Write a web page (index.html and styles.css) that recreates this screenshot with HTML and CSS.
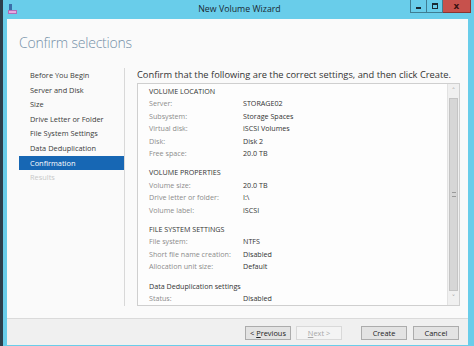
FILE: index.html
```html
<!DOCTYPE html>
<html>
<head>
<meta charset="utf-8">
<title>New Volume Wizard</title>
<link rel="stylesheet" href="styles.css">
</head>
<body>
<div class="window">
	<div class="titlebar">
		<svg class="app-icon" width="9" height="11" viewBox="0 0 9 11">
			<rect x="1" y="0" width="3" height="6" fill="#3a6ea8"/>
			<rect x="0" y="6" width="9" height="4" fill="#b06cb8"/>
			<rect x="1" y="7" width="7" height="2" fill="#e8a8e0"/>
		</svg>
		<div class="title">New Volume Wizard</div>
		<div class="controls">
			<span class="ctl ctl-min"><i></i></span>
			<span class="ctl ctl-max"><i></i></span>
			<span class="ctl ctl-close">x</span>
		</div>
	</div>
	<div class="client">
		<h1 class="page-title">Confirm selections</h1>
		<div class="main">
			<ul class="steps">
				<li>Before You Begin</li>
				<li>Server and Disk</li>
				<li>Size</li>
				<li>Drive Letter or Folder</li>
				<li>File System Settings</li>
				<li>Data Deduplication</li>
				<li class="current">Confirmation</li>
				<li class="disabled">Results</li>
			</ul>
			<div class="content">
				<p class="intro">Confirm that the following are the correct settings, and then click Create.</p>
				<div class="summary">
					<div class="summary-body">
						<div class="section">
							<div class="section-title">VOLUME LOCATION</div>
							<div class="row"><span class="label">Server:</span><span class="value">STORAGE02</span></div>
							<div class="row"><span class="label">Subsystem:</span><span class="value">Storage Spaces</span></div>
							<div class="row"><span class="label">Virtual disk:</span><span class="value">iSCSI Volumes</span></div>
							<div class="row"><span class="label">Disk:</span><span class="value">Disk 2</span></div>
							<div class="row"><span class="label">Free space:</span><span class="value">20.0 TB</span></div>
						</div>
						<div class="section">
							<div class="section-title">VOLUME PROPERTIES</div>
							<div class="row"><span class="label">Volume size:</span><span class="value">20.0 TB</span></div>
							<div class="row"><span class="label">Drive letter or folder:</span><span class="value">I:\</span></div>
							<div class="row"><span class="label">Volume label:</span><span class="value">iSCSI</span></div>
						</div>
						<div class="section">
							<div class="section-title">FILE SYSTEM SETTINGS</div>
							<div class="row"><span class="label">File system:</span><span class="value">NTFS</span></div>
							<div class="row"><span class="label">Short file name creation:</span><span class="value">Disabled</span></div>
							<div class="row"><span class="label">Allocation unit size:</span><span class="value">Default</span></div>
						</div>
						<div class="section">
							<div class="section-title">Data Deduplication settings</div>
							<div class="row"><span class="label">Status:</span><span class="value">Disabled</span></div>
						</div>
					</div>
					<div class="scrollbar">
						<div class="sb-arrow">&#708;</div>
						<div class="sb-thumb"><i></i></div>
						<div class="sb-arrow">&#709;</div>
					</div>
				</div>
			</div>
		</div>
		<div class="footer">
			<button class="btn">&lt; <u>P</u>revious</button>
			<button class="btn" disabled><u>N</u>ext &gt;</button>
			<button class="btn btn-create">Create</button>
			<button class="btn">Cancel</button>
		</div>
	</div>
</div>
</body>
</html>
```

FILE: styles.css
```css
html, body {margin:0; padding:0;}
body {background:#2d3f4c; font-family:"Open Sans", "Noto Sans", sans-serif; color:#333; overflow:hidden;}

.window {margin-left:3px; width:471px; height:346px; background:#69cdea; display:flex; flex-direction:column;}

.titlebar {height:19px; display:grid; grid-template-columns:1fr auto 1fr; align-items:start; padding:0 3px 0 5px;}
.app-icon {margin-top:4px;}
.title {font-size:8.8px; line-height:19px; color:#1a2a33;}
.controls {justify-self:end; display:flex;}
.ctl {height:13px; border:1px solid #3f7d92; border-top:none; display:flex; align-items:center; justify-content:center; box-sizing:border-box;}
.ctl + .ctl {border-left:none;}
.ctl-min {width:17px;}
.ctl-min i {width:5px; height:2px; background:#1a2a33; margin-top:3px;}
.ctl-max {width:16px;}
.ctl-max i {width:4px; height:3px; border:1px solid #1a2a33; border-top-width:2px;}
.ctl-close {width:28px; background:#c7514c; border-color:#8a3532; color:#3a1212; font:bold 9px/1 "DejaVu Sans", sans-serif;}

.client {flex:1; margin:0 6px 5px 4px; background:#fafafa; display:flex; flex-direction:column;}

.page-title {margin:0; padding:15px 0 0 12px; height:49px; box-sizing:border-box; font-size:14px; font-weight:300; line-height:18px; letter-spacing:-0.2px; color:#7490a8;}

.main {flex:1; display:flex; padding-bottom:12px;}

.steps {list-style:none; margin:0; padding:0 0 0 12px; width:105px; border-right:1px solid #d8d8d8; font-size:7.4px;}
.steps li {height:14.6px; line-height:14.6px; padding-left:11px; color:#3a3a3a; white-space:nowrap;}
.steps li.current {background:#1767b4; color:#fff;}
.steps li.disabled {color:#c8c8c8;}

.content {flex:1; display:flex; flex-direction:column; padding:0 8px 0 12px;}
.intro {margin:0; height:15px; line-height:14.6px; font-size:9.3px; color:#333; white-space:nowrap;}
.summary {flex:1; display:flex; border:1px solid #cfcfcf; background:#fdfdfd;}
.summary-body {flex:1; padding:1px 0 0 11px; font-size:7.15px; line-height:12.4px;}
.section + .section {margin-top:7px;}
.section-title {color:#333;}
.row {display:flex;}
.label {width:94px; color:#8c8c8c;}
.value {color:#333;}

.scrollbar {width:11px; display:flex; flex-direction:column; border-left:1px solid #e2e2e2; background:#f0f0f0;}
.sb-arrow {height:14px; font:7px/14px "DejaVu Sans", sans-serif; color:#9a9a9a; text-align:center;}
.sb-thumb {flex:1; margin:0 1px; background:#d6d6d6; border:1px solid #c4c4c4; display:flex; align-items:center; justify-content:center;}
.sb-thumb i {width:4px; height:3px; border-top:1px solid #9a9a9a; border-bottom:1px solid #9a9a9a;}

.footer {height:27px; box-sizing:border-box; border-top:1px solid #dadada; background:#f0f0f0; display:flex; justify-content:flex-end; align-items:flex-start; padding:7px 9px 0 0;}
.btn {width:46px; height:14px; margin-left:5px; padding:0; box-sizing:border-box; border:1px solid #acacac; background:#e3e3e3; font-family:"Open Sans", "Noto Sans", sans-serif; font-size:7.4px; line-height:12px; color:#222;}
.btn u {text-decoration:underline;}
.btn:disabled {background:#f4f4f4; border-color:#d9d9d9; color:#a8a8a8;}
.btn-create {margin-left:19px;}
.btn-create + .btn {margin-left:6px;}
```
